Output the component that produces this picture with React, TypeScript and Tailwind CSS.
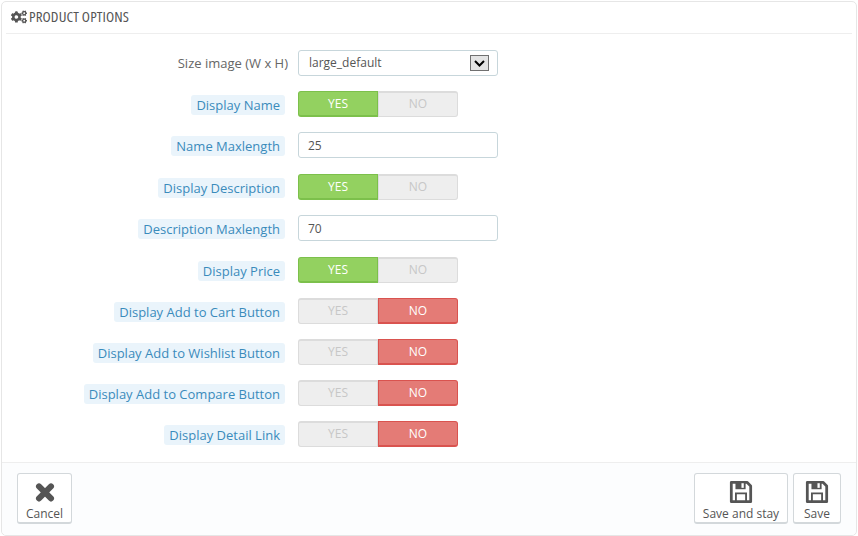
import { FaCogs } from 'react-icons/fa';

function Toggle({ on }: { on: boolean }) {
  return (
    <div className="flex h-[26px] w-[160px] text-[12px]">
      <div
        className={
          on
            ? 'h-full w-[80px] rounded-l-[3px] border border-b-2 border-[#7cc04b] bg-[#93d160] text-center leading-[24px] text-white'
            : 'h-full w-[80px] rounded-l-[3px] border border-t-2 border-[#dcdcdc] bg-[#eeeeee] text-center leading-[22px] text-[#c7c7c7]'
        }
      >
        YES
      </div>
      <div
        className={
          on
            ? 'h-full w-[80px] rounded-r-[3px] border border-t-2 border-[#dcdcdc] bg-[#eeeeee] text-center leading-[22px] text-[#c7c7c7]'
            : 'h-full w-[80px] rounded-r-[3px] border border-b-2 border-[#d9534f] bg-[#e47b76] text-center leading-[24px] text-white'
        }
      >
        NO
      </div>
    </div>
  );
}

function Row({ label, hint, nudge, children }: { label: string; hint?: boolean; nudge?: boolean; children: React.ReactNode }) {
  return (
    <div className={nudge ? 'mt-px flex h-[26px] items-center' : 'flex h-[26px] items-center'}>
      <div className="flex w-[286px] justify-end">
        {hint ? (
          <span className="mr-[3px] mt-[2px] rounded-[3px] bg-[#eaf4fb] px-[5px] text-[13px] leading-[20px] text-[#3a8bbb]">{label}</span>
        ) : (
          <span className="text-[13px] leading-[20px] text-[#666666]">{label}</span>
        )}
      </div>
      <div className="ml-[10px]">{children}</div>
    </div>
  );
}

function TextInput({ value }: { value: string }) {
  return (
    <div className="h-[26px] w-[200px] rounded-[3px] border border-[#c7d6db] bg-white pl-[9px] text-[12px] leading-[26px] text-[#555555]">
      {value}
    </div>
  );
}

function ToolbarButton({ label, wide, children }: { label: string; wide: number; children: React.ReactNode }) {
  return (
    <div
      className="flex h-[51px] flex-col items-center rounded-[3px] border border-b-2 border-[#d3d8db] bg-white pt-[6px] text-[12px] text-[#555555]"
      style={{ width: wide }}
    >
      {children}
      <span className="mt-[1px] leading-[17px]">{label}</span>
    </div>
  );
}

function SaveIcon() {
  return (
    <svg width="24" height="26" viewBox="0 0 24 26" fill="none">
      <path d="M1.5 2.5H18.5L22.5 6.5V23.5H1.5Z" stroke="#555555" strokeWidth="3" strokeLinejoin="round" />
      <path d="M6 2H17V10H6Z" fill="#555555" />
      <path d="M12.5 3.5H15V8.5H12.5Z" fill="#ffffff" />
      <path d="M6.5 23V14.5H17.5V23" stroke="#555555" strokeWidth="2" />
    </svg>
  );
}

function CancelIcon() {
  return (
    <svg width="22" height="26" viewBox="0 0 22 26" fill="none">
      <path d="M4.5 7L17.5 20M17.5 7L4.5 20" stroke="#555555" strokeWidth="6.5" strokeLinecap="round" />
    </svg>
  );
}

export default function App() {
  return (
    <div className="h-[536px] w-[858px] bg-white pl-px pt-px font-['Open_Sans',sans-serif]">
      <div className="flex h-[535px] w-[856px] flex-col rounded-[5px] border border-[#e6e6e6] bg-white">
        <div className="mx-[4px] flex h-[32px] items-center gap-[2px] border-b border-[#eeeeee] pb-[2px] pl-[5px] text-[#555555]">
          <FaCogs className="h-[16px] w-[16px]" />
          <span className="text-[15px] tracking-[0.1px] [font-stretch:75%]">PRODUCT OPTIONS</span>
        </div>
        <div className="flex flex-1 flex-col gap-[15px] pt-[16px]">
          <Row label="Size image (W x H)">
            <div className="flex h-[26px] w-[200px] items-center justify-between rounded-[3px] border border-[#c7d6db] bg-white pl-[10px] pr-[8px] text-[12px] text-[#555555]">
              large_default
              <div className="flex h-[16px] w-[19px] items-center justify-center border border-[#707070] bg-[#e4e4e4]">
                <svg width="11" height="7" viewBox="0 0 11 7" fill="none">
                  <path d="M1 1l4.5 4.5L10 1" stroke="#000" strokeWidth="2" />
                </svg>
              </div>
            </div>
          </Row>
          <Row label="Display Name" hint><Toggle on /></Row>
          <Row label="Name Maxlength" hint><TextInput value="25" /></Row>
          <Row label="Display Description" hint nudge><Toggle on /></Row>
          <Row label="Description Maxlength" hint><TextInput value="70" /></Row>
          <Row label="Display Price" hint nudge><Toggle on /></Row>
          <Row label="Display Add to Cart Button" hint><Toggle on={false} /></Row>
          <Row label="Display Add to Wishlist Button" hint><Toggle on={false} /></Row>
          <Row label="Display Add to Compare Button" hint><Toggle on={false} /></Row>
          <Row label="Display Detail Link" hint><Toggle on={false} /></Row>
        </div>
        <div className="flex h-[73px] items-start justify-between rounded-b-[5px] border-t border-[#eeeeee] bg-[#fcfdfe] px-[15px] pt-[10px]">
          <ToolbarButton label="Cancel" wide={55}>
            <CancelIcon />
          </ToolbarButton>
          <div className="flex gap-[5px]">
            <ToolbarButton label="Save and stay" wide={94}>
              <SaveIcon />
            </ToolbarButton>
            <ToolbarButton label="Save" wide={48}>
              <SaveIcon />
            </ToolbarButton>
          </div>
        </div>
      </div>
    </div>
  );
}
